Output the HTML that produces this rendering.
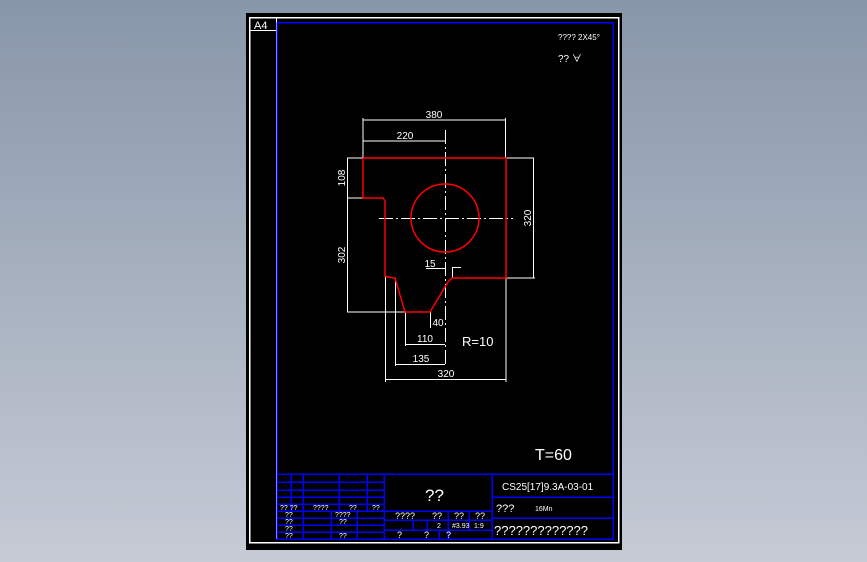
<!DOCTYPE html>
<html><head><meta charset="utf-8"><style>
html,body{margin:0;padding:0;width:867px;height:562px;overflow:hidden;background:linear-gradient(#8796a9,#c6cbd5);}
svg{position:absolute;left:0;top:0}
text{font-family:"Liberation Sans","Noto Sans CJK SC",sans-serif;fill:#fff}
line,polyline,rect{shape-rendering:crispEdges}
</style></head><body>
<svg width="867" height="562" viewBox="0 0 867 562">
<rect x="246" y="13" width="376" height="537" fill="#000"/>
<rect x="249.5" y="17.5" width="369" height="525" fill="none" stroke="#fff" stroke-width="1.5"/>
<line x1="276.5" y1="18" x2="276.5" y2="539" stroke="#fff"/>
<line x1="250" y1="30.5" x2="276" y2="30.5" stroke="#fff"/>
<text x="254" y="29" font-size="11">A4</text>
<rect x="277" y="22.5" width="336" height="516.5" fill="none" stroke="#00f" stroke-width="1.5"/>
<text x="558" y="40" font-size="8">???? 2X45°</text>
<text x="558" y="62" font-size="10">?? ∀</text>

<g stroke="#fff" stroke-width="1.3" fill="none">
<line x1="363" y1="120" x2="505" y2="120"/><line x1="363" y1="141" x2="445" y2="141"/>
<line x1="363" y1="118" x2="363" y2="158"/><line x1="505.5" y1="118" x2="505.5" y2="158"/>
<line x1="347" y1="158" x2="534" y2="158"/>
<line x1="347.5" y1="158" x2="347.5" y2="312"/>
<line x1="347" y1="198" x2="363" y2="198"/>
<line x1="347" y1="312" x2="405" y2="312"/>
<line x1="533.5" y1="158" x2="533.5" y2="278"/>
<line x1="506" y1="278" x2="535" y2="278"/>
<line x1="385.5" y1="276" x2="385.5" y2="382"/>
<line x1="395.5" y1="278" x2="395.5" y2="366"/>
<line x1="405.5" y1="312" x2="405.5" y2="346"/>
<line x1="430.5" y1="312" x2="430.5" y2="328"/>
<line x1="506" y1="278" x2="506" y2="382"/>
<line x1="385" y1="379.5" x2="506" y2="379.5"/>
<line x1="395" y1="364.5" x2="445" y2="364.5"/>
<line x1="405" y1="344.5" x2="445" y2="344.5"/>
<line x1="426" y1="268.5" x2="445" y2="268.5"/>
<polyline points="461,267.5 452.5,267.5 452.5,278"/>
<line x1="445.5" y1="130" x2="445.5" y2="366" stroke-dasharray="14,3,2,3"/>
<line x1="379" y1="218.5" x2="513" y2="218.5" stroke-dasharray="14,3,2,3"/>
</g>
<g stroke="#f00" stroke-width="1.5" fill="none">
<polyline points="363,158 506,158 506,278 452,278 448,282 430,312 405,312 395,278 388,277 385,276 385,201 383,198 363,198 363,158" style="shape-rendering:auto"/>
<circle cx="445" cy="218" r="34"/>
</g>
<g font-size="10" text-anchor="middle">
<text x="434" y="118">380</text><text x="405" y="139">220</text>
<text x="430" y="267">15</text><text x="438" y="326">40</text>
<text x="425" y="342">110</text><text x="421" y="362">135</text><text x="446" y="377">320</text>
<text transform="translate(345,178) rotate(-90)">108</text>
<text transform="translate(345,255) rotate(-90)">302</text>
<text transform="translate(531,218) rotate(-90)">320</text>
</g>
<text x="462" y="346" font-size="13">R=10</text>
<text x="535" y="460" font-size="16">T=60</text>

<g stroke="#00f" stroke-width="1.5" fill="none">
<line x1="277" y1="474" x2="613" y2="474"/>
<line x1="384" y1="474" x2="384" y2="539"/>
<line x1="492" y1="474" x2="492" y2="539"/>
<line x1="277" y1="482" x2="384" y2="482"/><line x1="277" y1="490" x2="384" y2="490"/>
<line x1="277" y1="497" x2="384" y2="497"/><line x1="277" y1="504" x2="384" y2="504"/>
<line x1="277" y1="511" x2="492" y2="511"/><line x1="277" y1="518" x2="384" y2="518"/>
<line x1="277" y1="525" x2="384" y2="525"/><line x1="277" y1="532" x2="384" y2="532"/>
<line x1="291" y1="474" x2="291" y2="511"/><line x1="303" y1="474" x2="303" y2="539"/>
<line x1="339" y1="474" x2="339" y2="511"/><line x1="367" y1="474" x2="367" y2="511"/>
<line x1="331" y1="511" x2="331" y2="539"/><line x1="357" y1="511" x2="357" y2="539"/>
<line x1="384" y1="520" x2="492" y2="520"/><line x1="384" y1="530" x2="492" y2="530"/>
<line x1="413" y1="520" x2="413" y2="530"/><line x1="427" y1="520" x2="427" y2="530"/>
<line x1="448" y1="511" x2="448" y2="539"/><line x1="469" y1="511" x2="469" y2="530"/>
<line x1="439" y1="530" x2="439" y2="539"/>
<line x1="492" y1="497" x2="613" y2="497"/><line x1="492" y1="518" x2="613" y2="518"/>
</g>
<g font-size="7">
<text x="280" y="510">?? ??</text><text x="313" y="510">????</text><text x="349" y="510">??</text><text x="372" y="510">??</text>
<text x="285" y="517">??</text><text x="335" y="517">????</text><text x="285" y="524">??</text><text x="339" y="524">??</text>
<text x="285" y="531">??</text><text x="285" y="538">??</text><text x="339" y="538">??</text>
<text x="437" y="528">2</text><text x="452" y="528">#3.93</text><text x="474" y="528">1:9</text>
<text x="535" y="511">16Mn</text>
</g>
<g font-size="9">
<text x="395" y="519">????</text><text x="432" y="519">??</text><text x="454" y="519">??</text><text x="475" y="519">??</text>
<text x="397" y="538">?</text><text x="424" y="538">?</text><text x="446" y="538">?</text>
</g>
<text x="425" y="501" font-size="17">??</text>
<text x="502" y="490" font-size="10">CS25[17]9.3A-03-01</text>
<text x="496" y="512" font-size="11">???</text>
<text x="494" y="535" font-size="13">?????????????</text>
</svg>
</body></html>
